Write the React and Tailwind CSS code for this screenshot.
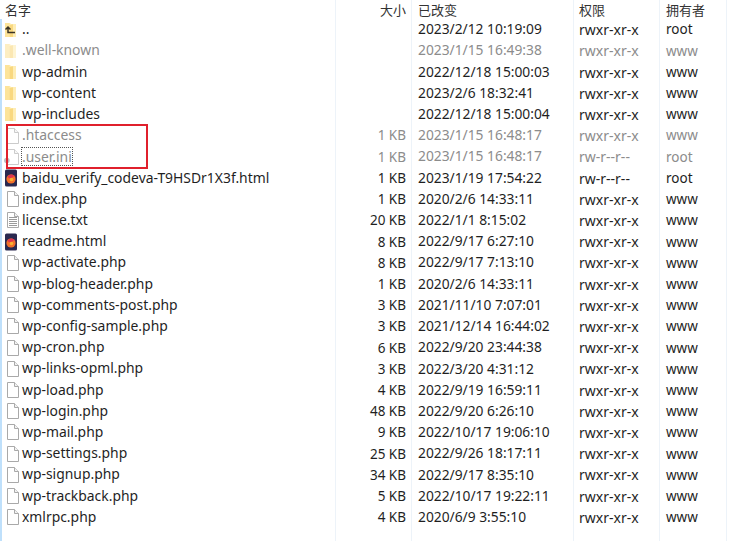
import React from 'react';

const files = [
  { name: '..', modified: '2023/2/12 10:19:09', perm: 'rwxr-xr-x', owner: 'root', icon: 'up' },
  { name: '.well-known', modified: '2023/1/15 16:49:38', perm: 'rwxr-xr-x', owner: 'www', icon: 'folder', hidden: true },
  { name: 'wp-admin', modified: '2022/12/18 15:00:03', perm: 'rwxr-xr-x', owner: 'www', icon: 'folder' },
  { name: 'wp-content', modified: '2023/2/6 18:32:41', perm: 'rwxr-xr-x', owner: 'www', icon: 'folder' },
  { name: 'wp-includes', modified: '2022/12/18 15:00:04', perm: 'rwxr-xr-x', owner: 'www', icon: 'folder' },
  { name: '.htaccess', size: '1 KB', modified: '2023/1/15 16:48:17', perm: 'rwxr-xr-x', owner: 'www', icon: 'file', hidden: true },
  { name: '.user.ini', size: '1 KB', modified: '2023/1/15 16:48:17', perm: 'rw-r--r--', owner: 'root', icon: 'ini', hidden: true, focused: true },
  { name: 'baidu_verify_codeva-T9HSDr1X3f.html', size: '1 KB', modified: '2023/1/19 17:54:22', perm: 'rw-r--r--', owner: 'root', icon: 'html' },
  { name: 'index.php', size: '1 KB', modified: '2020/2/6 14:33:11', perm: 'rwxr-xr-x', owner: 'www', icon: 'file' },
  { name: 'license.txt', size: '20 KB', modified: '2022/1/1 8:15:02', perm: 'rwxr-xr-x', owner: 'www', icon: 'text' },
  { name: 'readme.html', size: '8 KB', modified: '2022/9/17 6:27:10', perm: 'rwxr-xr-x', owner: 'www', icon: 'html' },
  { name: 'wp-activate.php', size: '8 KB', modified: '2022/9/17 7:13:10', perm: 'rwxr-xr-x', owner: 'www', icon: 'file' },
  { name: 'wp-blog-header.php', size: '1 KB', modified: '2020/2/6 14:33:11', perm: 'rwxr-xr-x', owner: 'www', icon: 'file' },
  { name: 'wp-comments-post.php', size: '3 KB', modified: '2021/11/10 7:07:01', perm: 'rwxr-xr-x', owner: 'www', icon: 'file' },
  { name: 'wp-config-sample.php', size: '3 KB', modified: '2021/12/14 16:44:02', perm: 'rwxr-xr-x', owner: 'www', icon: 'file' },
  { name: 'wp-cron.php', size: '6 KB', modified: '2022/9/20 23:44:38', perm: 'rwxr-xr-x', owner: 'www', icon: 'file' },
  { name: 'wp-links-opml.php', size: '3 KB', modified: '2022/3/20 4:31:12', perm: 'rwxr-xr-x', owner: 'www', icon: 'file' },
  { name: 'wp-load.php', size: '4 KB', modified: '2022/9/19 16:59:11', perm: 'rwxr-xr-x', owner: 'www', icon: 'file' },
  { name: 'wp-login.php', size: '48 KB', modified: '2022/9/20 6:26:10', perm: 'rwxr-xr-x', owner: 'www', icon: 'file' },
  { name: 'wp-mail.php', size: '9 KB', modified: '2022/10/17 19:06:10', perm: 'rwxr-xr-x', owner: 'www', icon: 'file' },
  { name: 'wp-settings.php', size: '25 KB', modified: '2022/9/26 18:17:11', perm: 'rwxr-xr-x', owner: 'www', icon: 'file' },
  { name: 'wp-signup.php', size: '34 KB', modified: '2022/9/17 8:35:10', perm: 'rwxr-xr-x', owner: 'www', icon: 'file' },
  { name: 'wp-trackback.php', size: '5 KB', modified: '2022/10/17 19:22:11', perm: 'rwxr-xr-x', owner: 'www', icon: 'file' },
  { name: 'xmlrpc.php', size: '4 KB', modified: '2020/6/9 3:55:10', perm: 'rwxr-xr-x', owner: 'www', icon: 'file' },
];

const Folder = ({ faded, up }) => (
  <svg width="16" height="16" viewBox="0 0 16 16" className={faded ? 'opacity-60' : ''}>
    <path d="M1 1 H6 L7 2 H12 V15 H1 Z" fill="#feedb5" />
    <path d="M1 1 H5.5 V15 H1 Z" fill="#fde49a" />
    <path d="M5.5 3 L9 2.2 V15 H5.5 Z" fill="#f9d87f" />
    {up && <path d="M1.5 7.5 L4 5 L6.5 7.5 M4 5.5 V10.5 H11" fill="none" stroke="#3a3324" strokeWidth="1.5" />}
  </svg>
);

const FileIcon = ({ faded, lines, gear }) => (
  <svg width="18" height="18" viewBox="0 0 18 18" className={faded ? 'opacity-60' : ''}>
    <path d="M3.5 1.5 H10.5 L14.5 5.5 V16.5 H3.5 Z" fill="#fff" stroke="#a9a9a9" />
    <path d="M10.5 1.5 V5.5 H14.5" fill="#f2f2f2" stroke="#a9a9a9" />
    {lines && <path d="M5 6.5 H13 M5 8.5 H13 M5 10.5 H13 M5 12.5 H13 M5 14.5 H13" stroke="#9a9a9a" />}
    {gear && <circle cx="2.8" cy="12.5" r="2.8" fill="#8f959b" />}
  </svg>
);

const HtmlIcon = () => (
  <svg width="16" height="18" viewBox="0 0 16 18">
    <rect x="1" y="0.5" width="12" height="17" rx="1.5" fill="#2a2950" />
    <circle cx="7" cy="10" r="4.6" fill="#f3702a" />
    <path d="M3.5 8 C5 4.5 10 4.5 11.5 8 C10 7 8.5 7.5 8 9.5 C6 9.5 5 9 3.5 8 Z" fill="#e2354f" />
    <circle cx="7.5" cy="10.5" r="1.8" fill="#f9b233" />
  </svg>
);

const icons = {
  up: () => <Folder up />,
  folder: (f) => <Folder faded={f.hidden} />,
  file: (f) => <FileIcon faded={f.hidden} />,
  ini: (f) => <FileIcon faded={f.hidden} gear />,
  text: () => <FileIcon lines />,
  html: () => <HtmlIcon />,
};

const Row = ({ file }) => {
  const tone = file.hidden ? 'text-[#8c8c8c]' : 'text-[#1f1f1f]';
  return (
    <div className={`grid grid-cols-[336px_76px_162px_86px_67px_1fr] h-[21.21px] items-stretch ${tone}`}>
      <div className="flex items-center border-r border-[#edf3f9] pl-[4px] text-[13.9px]">
        <span className="flex w-[18px] h-4 items-center justify-start shrink-0">{icons[file.icon](file)}</span>
        <span className={file.focused ? 'outline-1 outline-dotted outline-[#555] leading-[17px]' : ''}>{file.name}</span>
      </div>
      <div className="flex items-center justify-end border-r border-[#edf3f9] pr-[5px]">{file.size}</div>
      <div className="flex items-center border-r border-[#edf3f9] pl-[6px] text-[13.8px]">{file.modified}</div>
      <div className="flex items-center border-r border-[#edf3f9] pl-[5px] text-[14px]">{file.perm}</div>
      <div className="flex items-center border-r border-[#edf3f9] pl-[6px]">{file.owner}</div>
      <div />
    </div>
  );
};

export default function App() {
  return (
    <div className="relative flex flex-col w-[750px] h-[541px] overflow-hidden bg-white text-[13.5px] font-['Noto_Sans','Noto_Sans_CJK_SC',sans-serif]">
      <div className="grid grid-cols-[336px_76px_162px_86px_67px_1fr] h-[19px] pb-[5px] text-[13px] text-[#333] font-['Noto_Sans_CJK_SC',sans-serif]">
        <div className="flex items-center border-r border-[#edf3f9] pl-[5px]">名字</div>
        <div className="flex items-center justify-end border-r border-[#edf3f9] pr-[5px]">大小</div>
        <div className="flex items-center border-r border-[#edf3f9] pl-[6px]">已改变</div>
        <div className="flex items-center border-r border-[#edf3f9] pl-[5px]">权限</div>
        <div className="flex items-center border-r border-[#edf3f9] pl-[6px]">拥有者</div>
        <div />
      </div>
      <div className="flex-1 flex flex-col">
        {files.map((file) => (
          <Row key={file.name} file={file} />
        ))}
        <div className="flex-1 grid grid-cols-[336px_76px_162px_86px_67px_1fr]">
          <div className="border-r border-[#edf3f9]" />
          <div className="border-r border-[#edf3f9]" />
          <div className="border-r border-[#edf3f9]" />
          <div className="border-r border-[#edf3f9]" />
          <div className="border-r border-[#edf3f9]" />
          <div />
        </div>
      </div>
      {/* list focus strip on the left edge */}
      <div className="absolute left-0 top-[19px] bottom-0 w-[2px] bg-[#bfe0fb]" />
      {/* red box drawn over the screenshot */}
      <div className="absolute left-[6px] top-[124px] w-[142px] h-[45px] border-2 border-[#e0202c]" />
    </div>
  );
}
